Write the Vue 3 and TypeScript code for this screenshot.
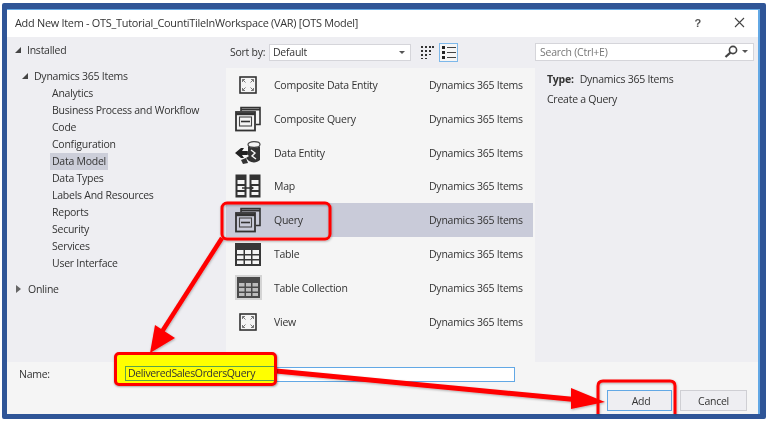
<script setup lang="ts">
interface Item {
  name: string;
  icon: 'focus' | 'stack' | 'entity' | 'map' | 'table' | 'collection';
  selected?: boolean;
}

const categories = [
  'Analytics',
  'Business Process and Workflow',
  'Code',
  'Configuration',
  'Data Model',
  'Data Types',
  'Labels And Resources',
  'Reports',
  'Security',
  'Services',
  'User Interface',
];

const items: Item[] = [
  { name: 'Composite Data Entity', icon: 'focus' },
  { name: 'Composite Query', icon: 'stack' },
  { name: 'Data Entity', icon: 'entity' },
  { name: 'Map', icon: 'map' },
  { name: 'Query', icon: 'stack', selected: true },
  { name: 'Table', icon: 'table' },
  { name: 'Table Collection', icon: 'collection' },
  { name: 'View', icon: 'focus' },
];
</script>

<template>
  <div class="page">
    <div class="dialog">
      <div class="titlebar">
        <span class="title">Add New Item - OTS_Tutorial_CountiTileInWorkspace (VAR) [OTS Model]</span>
        <span class="help">?</span>
        <svg class="close" width="11" height="11" viewBox="0 0 11 11">
          <path d="M1 1l9 9M10 1l-9 9" stroke="#444" stroke-width="1.1" fill="none" />
        </svg>
      </div>

      <div class="body">
        <aside class="tree">
          <div class="tree-row top">
            <span class="tri open"></span>
            <span>Installed</span>
          </div>
          <div class="tree-row group">
            <span class="tri open"></span>
            <span>Dynamics 365 Items</span>
          </div>
          <div
            v-for="cat in categories"
            :key="cat"
            class="tree-leaf"
          >
            <span :class="{ current: cat === 'Data Model' }">{{ cat }}</span>
          </div>
          <div class="tree-row online">
            <span class="tri closed"></span>
            <span>Online</span>
          </div>
        </aside>

        <section class="center">
          <div class="toolbar">
            <span class="sort-label">Sort by:</span>
            <div class="select">
              <span>Default</span>
              <span class="caret"></span>
            </div>
            <svg class="view-icon" width="13" height="14" viewBox="0 0 13 14">
              <path d="M0 0h2v2H0zM4 0h2v2H4zM8 0h2v2H8zM11 0h2v2h-2zM0 4h2v2H0zM4 4h2v2H4zM8 4h2v2H8zM0 8h2v2H0zM4 8h2v2H4zM8 8h2v1H8zM0 12h2v1H0zM4 12h2v1H4z" fill="#333" />
            </svg>
            <div class="view-btn">
              <svg width="14" height="13" viewBox="0 0 14 13">
                <path d="M0 0h3v3H0zM0 5h3v3H0zM0 10h3v3H0z" fill="#222" />
                <path d="M5 1.5h9M5 6.5h9M5 11.5h9" stroke="#444" stroke-width="1" />
              </svg>
            </div>
          </div>

          <div class="list">
            <div
              v-for="item in items"
              :key="item.name"
              class="list-row"
              :class="{ selected: item.selected }"
            >
              <span class="icon-cell">
                <svg v-if="item.icon === 'focus'" width="18" height="18" viewBox="0 0 18 18">
                  <rect x="1" y="1" width="16" height="16" fill="none" stroke="#333" stroke-width="1.6" />
                  <path d="M3.5 3.5l3 3M3.5 3.5v2.5M3.5 3.5h2.5M14.5 3.5l-3 3M14.5 3.5v2.5M14.5 3.5H12M3.5 14.5l3-3M3.5 14.5V12M3.5 14.5H6M14.5 14.5l-3-3M14.5 14.5V12M14.5 14.5H12" stroke="#777" stroke-width="1" fill="none" />
                </svg>
                <svg v-else-if="item.icon === 'stack'" width="26" height="26" viewBox="0 0 26 26">
                  <path d="M6 5V1.5h19v17h-4" fill="none" stroke="#333" stroke-width="1.6" />
                  <path d="M6 3.5h19" stroke="#333" stroke-width="2" />
                  <rect x="1" y="6" width="19" height="18.5" fill="none" stroke="#333" stroke-width="1.8" />
                  <path d="M1 8h19" stroke="#333" stroke-width="2.4" />
                  <rect x="4.5" y="11" width="12" height="9" fill="none" stroke="#444" stroke-width="1.1" />
                  <path d="M6 15.5h9" stroke="#333" stroke-width="1.6" />
                </svg>
                <svg v-else-if="item.icon === 'entity'" width="28" height="24" viewBox="0 0 28 24">
                  <ellipse cx="20" cy="3.5" rx="6" ry="2.8" fill="none" stroke="#444" stroke-width="1.2" />
                  <path d="M14 5v5l-4 1 5 4-3 2 3 3c3 2 8 2 11-1V5c-2 2-10 2-12 0z" fill="#333" />
                  <path d="M17 9l4 3-3 3 4 3" stroke="#f5f5f5" stroke-width="1.4" fill="none" />
                  <path d="M1 12l6-5 3 0-2 3h5v4H8l2 3H7z" fill="#222" />
                  <path d="M7 19l5-2 2 5-5 1z" fill="#333" />
                </svg>
                <svg v-else-if="item.icon === 'map'" width="26" height="24" viewBox="0 0 26 24">
                  <rect x="0.5" y="0.5" width="11" height="23" fill="#333" />
                  <rect x="14.5" y="0.5" width="11" height="23" fill="#333" />
                  <path d="M2.5 6h7v4h-7zM2.5 12h7v4h-7zM2.5 18h7v3h-7zM16.5 6h7v4h-7zM16.5 12h7v4h-7zM16.5 18h7v3h-7z" fill="#f5f5f5" />
                  <path d="M7 14h11" stroke="#333" stroke-width="1.5" />
                  <path d="M15 11l4 3-4 3z" fill="#333" />
                </svg>
                <svg v-else-if="item.icon === 'table'" width="26" height="23" viewBox="0 0 26 23">
                  <rect width="26" height="23" fill="#383838" />
                  <path d="M2 7h6.5v4H2zM10 7h6v4h-6zM17.5 7H24v4h-6.5zM2 12.5h6.5v3.5H2zM10 12.5h6V16h-6zM17.5 12.5H24V16h-6.5zM2 17.5h6.5V21H2zM10 17.5h6V21h-6zM17.5 17.5H24V21h-6.5z" fill="#f5f5f5" />
                </svg>
                <svg v-else width="27" height="25" viewBox="0 0 27 25">
                  <rect width="27" height="25" fill="#d4d4d4" />
                  <rect x="2" y="2" width="23" height="21" fill="#4a4a4a" />
                  <path d="M4 8h5.5v3.5H4zM11 8h5v3.5h-5zM17.5 8H23v3.5h-5.5zM4 13h5.5v3.5H4zM11 13h5v3.5h-5zM17.5 13H23v3.5h-5.5zM4 18h5.5v3H4zM11 18h5v3h-5zM17.5 18H23v3h-5.5z" fill="#bdbdbd" />
                </svg>
              </span>
              <span class="item-name">{{ item.name }}</span>
              <span class="item-group">Dynamics 365 Items</span>
            </div>
          </div>
        </section>

        <section class="details">
          <div class="search">
            <span class="placeholder">Search (Ctrl+E)</span>
            <svg width="14" height="13" viewBox="0 0 14 13">
              <circle cx="9" cy="5" r="3.6" fill="none" stroke="#444" stroke-width="1.6" />
              <path d="M6.4 7.6L1.5 12" stroke="#444" stroke-width="2.2" />
            </svg>
            <span class="caret small"></span>
          </div>
          <div class="type-line"><b>Type:</b><span>Dynamics 365 Items</span></div>
          <div class="desc">Create a Query</div>
        </section>
      </div>

      <div class="footer">
        <div class="name-row">
          <label class="name-label">Name:</label>
          <div class="name-input"></div>
        </div>
        <div class="buttons">
          <button class="btn primary">Add</button>
          <button class="btn">Cancel</button>
        </div>
      </div>
    </div>

    <!-- annotations pasted on top of the screenshot -->
    <svg class="marks" width="768" height="421" viewBox="0 0 768 421">
      <defs>
        <filter id="soft" x="-10%" y="-10%" width="120%" height="120%">
          <feDropShadow dx="0.5" dy="1" stdDeviation="1" flood-color="#000" flood-opacity="0.3" />
        </filter>
      </defs>
      <g filter="url(#soft)" fill="none" stroke="#f00">
        <rect x="222" y="203" width="108" height="36" rx="5" stroke-width="3" />
        <path d="M222 238L156 341" stroke-width="4.5" />
        <path d="M150 353l5-28 20 13z" fill="#f00" stroke="none" />
        <path d="M276 371L580 400" stroke-width="5" />
        <path d="M571 388l34 14-34 7z" fill="#f00" stroke="none" />
        <path d="M598 414v-28q0-5 5-5h67q5 0 5 5v28" stroke-width="3" />
      </g>
    </svg>
    <div class="name-mark">
      <div class="name-inner">DeliveredSalesOrdersQuery</div>
    </div>
  </div>
</template>

<style>
html,
body {
  margin: 0;
  background: #fff;
}
</style>

<style scoped>
.page {
  position: relative;
  width: 768px;
  height: 421px;
  overflow: hidden;
  padding: 3px 2px 2px 2px;
  box-sizing: border-box;
  background: #fff;
  font-family: "Open Sans", "Noto Sans", sans-serif;
  font-size: 10.5px;
  letter-spacing: -0.25px;
  color: #333;
  filter: blur(0.45px);
}

.dialog {
  height: 100%;
  box-sizing: border-box;
  border: solid #2f5597;
  border-width: 6px 6px 5px 5px;
  border-radius: 2px;
  display: flex;
  flex-direction: column;
  background: #f5f5f5;
  box-shadow: inset -2px 0 0 #62a8e5, inset 0 1px 0 #62a8e5;
}

.titlebar {
  height: 27px;
  flex: none;
  box-sizing: border-box;
  margin-right: 2px;
  margin-top: 1px;
  display: flex;
  align-items: center;
  padding: 0 13px 2px 8px;
  background: #fff;
}

.title {
  flex: 1;
  font-size: 10.9px;
  letter-spacing: -0.27px;
  color: #333;
  white-space: nowrap;
}

.help {
  font-family: "Liberation Sans", sans-serif;
  font-weight: bold;
  font-size: 11px;
  color: #555;
  margin-right: 33px;
}

.body {
  height: 325px;
  flex: none;
  margin-right: 2px;
  display: flex;
  background: #eeeef2;
}

.tree {
  width: 219px;
  flex: none;
  padding-top: 4px;
  box-sizing: border-box;
}

.tree-row {
  display: flex;
  align-items: center;
  height: 17px;
  gap: 6px;
}

.tree-row.top {
  padding-left: 8px;
  margin-bottom: 9px;
}

.tree-row.group {
  padding-left: 15px;
  margin-bottom: 1px;
}

.tree-row.online {
  padding-left: 9px;
  margin-top: 8px;
  gap: 7px;
}

.tri {
  width: 0;
  height: 0;
  flex: none;
}

.tri.open {
  border-bottom: 6px solid #444;
  border-left: 6px solid transparent;
}

.tri.closed {
  border-left: 5px solid #666;
  border-top: 4px solid transparent;
  border-bottom: 4px solid transparent;
}

.tree-leaf {
  height: 17px;
  line-height: 17px;
  padding-left: 45px;
  white-space: nowrap;
}

.current {
  display: inline-block;
  background: #ccced9;
  padding: 0 2px;
  margin-left: -2px;
}

.center {
  width: 309px;
  flex: none;
  display: flex;
  flex-direction: column;
}

.toolbar {
  height: 31px;
  flex: none;
  display: flex;
  align-items: center;
  padding-left: 4px;
}

.sort-label {
  width: 39px;
  flex: none;
  margin-top: -2px;
}

.select {
  width: 142px;
  height: 17px;
  box-sizing: border-box;
  flex: none;
  display: flex;
  align-items: center;
  justify-content: space-between;
  padding: 0 5px 1px 3px;
  background: #fff;
  border: 1px solid #d5d5da;
}

.caret {
  width: 0;
  height: 0;
  border-left: 3px solid transparent;
  border-right: 3px solid transparent;
  border-top: 3px solid #555;
}

.view-icon {
  margin-left: 10px;
}

.view-btn {
  width: 19px;
  height: 19px;
  box-sizing: border-box;
  margin-left: 5px;
  display: flex;
  align-items: center;
  justify-content: center;
  background: #f5f5f5;
  border: 1px solid #7db8ea;
}

.list {
  height: 294px;
  background: #f5f5f5;
  box-sizing: border-box;
}

.list-row {
  height: 33.85px;
  display: flex;
  align-items: center;
}

.list-row.selected {
  background: #c9cbd9;
  margin-right: 2px;
}

.icon-cell {
  width: 44px;
  flex: none;
  display: flex;
  align-items: center;
  justify-content: center;
}

.item-name {
  width: 155px;
  margin-left: 4px;
  flex: none;
  white-space: nowrap;
}

.item-group {
  white-space: nowrap;
}

.details {
  flex: 1;
  min-width: 0;
}

.search {
  height: 18px;
  box-sizing: border-box;
  margin: 6px 4px 0 0;
  display: flex;
  align-items: center;
  padding: 0 5px 1px 4px;
  gap: 3px;
  background: #fff;
  border: 1px solid #d5d5da;
}

.placeholder {
  flex: 1;
  color: #777;
}

.caret.small {
  margin-left: 1px;
}

.type-line {
  display: flex;
  gap: 6px;
  margin: 11px 0 0 12px;
  height: 15px;
  line-height: 15px;
}

.desc {
  margin: 5px 0 0 12px;
  height: 15px;
  line-height: 15px;
}

.footer {
  flex: 1;
  position: relative;
  display: flex;
  flex-direction: column;
  background: #f5f5f5;
  margin-right: 2px;
}

.name-row {
  display: flex;
  align-items: center;
  height: 16px;
  margin-top: 4px;
  padding-left: 12px;
}

.name-label {
  width: 95px;
  flex: none;
}

.name-input {
  width: 401px;
  height: 15px;
  box-sizing: border-box;
  background: #fff;
  border: 1px solid #62a8e5;
}

.buttons {
  display: flex;
  justify-content: flex-end;
  gap: 8px;
  margin-top: 8px;
  padding-right: 11px;
}

.btn {
  width: 67px;
  height: 21px;
  box-sizing: border-box;
  font: inherit;
  letter-spacing: inherit;
  color: #333;
  background: #eeeef2;
  border: 1px solid #cfcfd4;
  padding: 0;
}

.btn.primary {
  border-color: #62a8e5;
  width: 65px;
  padding-left: 3px;
}

.marks {
  position: absolute;
  left: 0;
  top: 0;
  pointer-events: none;
}

.name-mark {
  position: absolute;
  left: 114px;
  top: 352px;
  width: 163px;
  height: 34px;
  box-sizing: border-box;
  padding: 11px 0 0 8px;
  background: #ffff00;
  border: 3px solid #f00;
  border-radius: 5px;
  box-shadow: 0.5px 1px 2px rgba(0, 0, 0, 0.3);
}

.name-inner {
  height: 15px;
  line-height: 13px;
  box-sizing: border-box;
  padding-left: 2px;
  border: 1px solid #5aa54a;
  border-right: none;
  color: #333;
  letter-spacing: -0.35px;
  white-space: nowrap;
}
</style>
